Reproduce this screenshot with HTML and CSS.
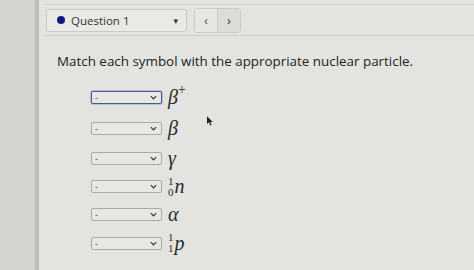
FILE: index.html
```html
<!DOCTYPE html>
<html lang="en">

<head>
  <meta charset="UTF-8">
  <meta name="viewport" content="width=device-width, initial-scale=1.0">
  <title>Question 1</title>
  <link rel="stylesheet" href="styles.css">
</head>

<body>
  <div class="page">
    <div class="side"></div>
    <div class="main">
      <div class="topbar">
        <div class="qsel">
          <span class="dot"></span>
          <span class="qname">Question 1</span>
          <span class="caret">&#9662;</span>
        </div>
        <div class="nav">
          <span class="navbtn prev">&lsaquo;</span>
          <span class="navbtn next">&rsaquo;</span>
        </div>
      </div>

      <p class="prompt">Match each symbol with the appropriate nuclear particle.</p>

      <ul class="items">
        <li class="item h31">
          <div class="pick focus"><span>-</span><svg class="chev" viewBox="0 0 8 5"><path d="M1 1l3 3 3-3" /></svg></div>
          <span class="sym"><i>&beta;</i><span class="plus">+</span></span>
        </li>
        <li class="item h30">
          <div class="pick"><span>-</span><svg class="chev" viewBox="0 0 8 5"><path d="M1 1l3 3 3-3" /></svg></div>
          <span class="sym"><i>&beta;</i></span>
        </li>
        <li class="item h30">
          <div class="pick"><span>-</span><svg class="chev" viewBox="0 0 8 5"><path d="M1 1l3 3 3-3" /></svg></div>
          <span class="sym"><i>&gamma;</i></span>
        </li>
        <li class="item h27">
          <div class="pick"><span>-</span><svg class="chev" viewBox="0 0 8 5"><path d="M1 1l3 3 3-3" /></svg></div>
          <span class="sym"><span class="iso"><span>1</span><span>0</span></span><i>n</i></span>
        </li>
        <li class="item h28">
          <div class="pick"><span>-</span><svg class="chev" viewBox="0 0 8 5"><path d="M1 1l3 3 3-3" /></svg></div>
          <span class="sym"><i>&alpha;</i></span>
        </li>
        <li class="item">
          <div class="pick"><span>-</span><svg class="chev" viewBox="0 0 8 5"><path d="M1 1l3 3 3-3" /></svg></div>
          <span class="sym"><span class="iso"><span>1</span><span>1</span></span><i>p</i></span>
        </li>
      </ul>

      <!-- mouse pointer in the photo -->
      <svg class="cursor" viewBox="0 0 8 11"><path d="M0 0v9l2.2-2 1.6 3.5 1.4-.6-1.6-3.4h3z" /></svg>
    </div>
  </div>
</body>

</html>
```

FILE: styles.css
```css
html,body{
  margin: 0;
  padding: 0;
  background: #e3e4df;
}
.page{
  display: flex;
  height: 270px;
  font-family: "Open Sans", "DejaVu Sans", sans-serif;
  color: #222;
}
.side{
  width: 35px;
  background: #d3d4d0;
  border-right: 4px solid #bdbdb9;
}
.main{
  position: relative;
  flex: 1;
  padding-top: 4px;
}
.topbar{
  display: flex;
  align-items: center;
  gap: 7px;
  margin-left: 6px;
  height: 30px;
  border-top: 1px solid #cfd0cb;
  border-bottom: 1px solid #cbccc7;
}
.qsel{
  display: flex;
  align-items: center;
  box-sizing: border-box;
  width: 141px;
  height: 23px;
  margin-left: 1px;
  padding: 0 8px 0 10px;
  border: 1px solid #c9cac5;
  border-radius: 3px;
  background: #e9eae6;
}
.dot{
  width: 8px;
  height: 8px;
  border-radius: 50%;
  background: #15157a;
  margin-right: 6px;
}
.qname{
  flex: 1;
  font-size: 11.5px;
  color: #333;
}
.caret{
  font-size: 9px;
  color: #333;
}
.nav{
  display: flex;
  height: 23px;
  border: 1px solid #cacbc6;
  border-radius: 3px;
}
.navbtn{
  width: 22px;
  display: flex;
  align-items: center;
  justify-content: center;
  font-size: 13px;
  color: #555;
}
.prev{
  background: #e6e7e3;
  border-right: 1px solid #c9cac5;
}
.next{
  background: #dcddd8;
  color: #333;
}
.prompt{
  margin: 16px 0 0 18px;
  font-size: 13.4px;
  color: #1e1e1e;
}
.items{
  list-style: none;
  margin: 12px 0 0 52px;
  padding: 0;
}
.item{
  display: flex;
  align-items: center;
  height: 30px;
}
.h31{ height: 31px; }
.h30{ height: 30px; }
.h28{ height: 28px; }
.h27{ height: 27px; }
.pick{
  display: flex;
  align-items: center;
  justify-content: space-between;
  box-sizing: border-box;
  width: 71px;
  height: 13px;
  padding: 0 4px 0 3px;
  border: 1px solid #a9aaa6;
  border-radius: 2px;
  background: #e7e8e4;
  font-size: 9px;
  color: #444;
}
.pick.focus{
  border: 1.5px solid #4a5a8c;
  box-shadow: 0 0 0 1px #b4bcd6;
}
.chev{
  width: 7px;
  height: 5px;
  fill: none;
  stroke: #333;
  stroke-width: 1.4;
}
.sym{
  display: flex;
  align-items: center;
  margin-left: 6px;
  font-family: "Liberation Serif", "DejaVu Serif", serif;
  font-size: 20px;
  color: #2a2a2a;
}
.plus{
  font-size: 14px;
  line-height: 14px;
  align-self: flex-start;
  margin-top: -3px;
}
.iso{
  display: flex;
  flex-direction: column;
  font-size: 11px;
  line-height: 11px;
  margin-right: 1px;
}
.cursor{
  position: absolute;
  left: 168px;
  top: 116px;
  width: 7px;
  height: 10px;
  fill: #222;
}
```
